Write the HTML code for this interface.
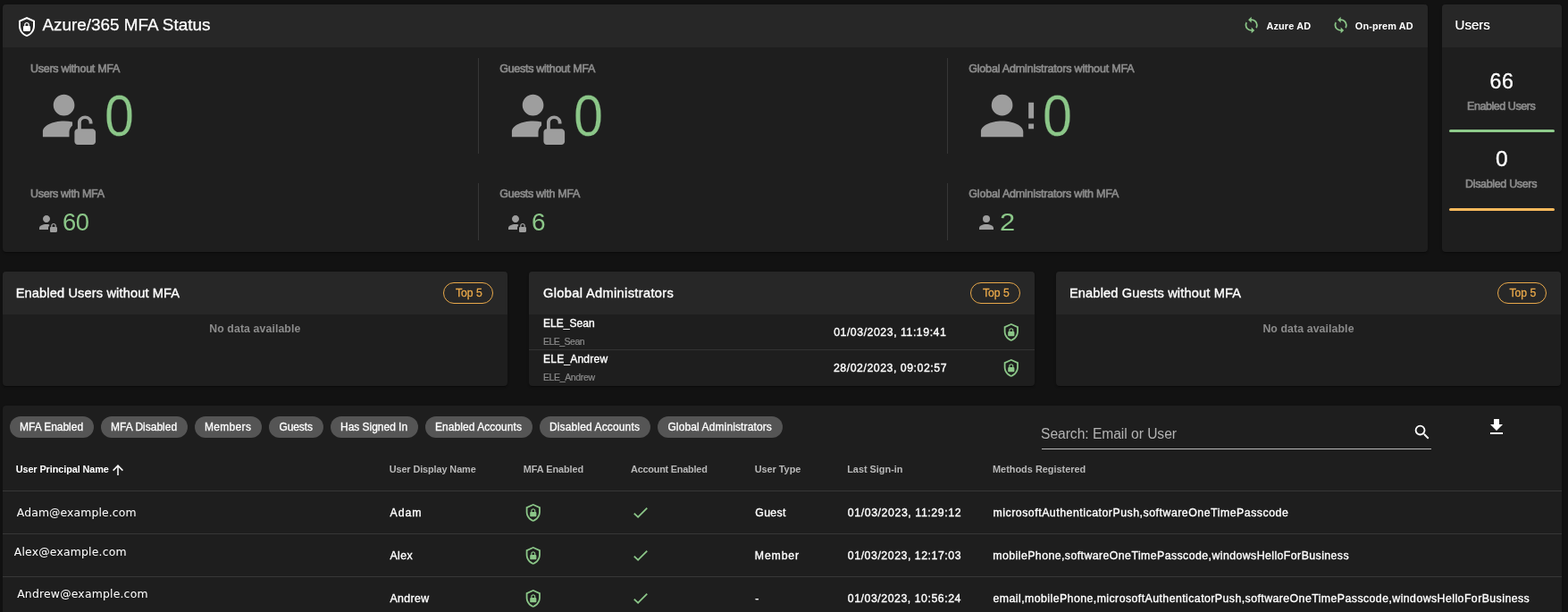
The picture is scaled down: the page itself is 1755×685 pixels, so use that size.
<!DOCTYPE html>
<html lang="en">
<head>
<meta charset="utf-8">
<title>Azure/365 MFA Status</title>
<style>
*{box-sizing:border-box;margin:0;padding:0}
html,body{width:1755px;height:685px;overflow:hidden;background:#121212}
body{position:relative;font-family:"Liberation Sans",sans-serif;color:#fff}
.card{position:absolute;background:#1e1e1e;border-radius:4px;box-shadow:0 2px 1px -1px rgba(0,0,0,.2),0 1px 1px 0 rgba(0,0,0,.14),0 1px 3px 0 rgba(0,0,0,.12);overflow:hidden}
.hdr{position:absolute;left:0;top:0;right:0;height:48px;background:#272727}
#txt{position:absolute;left:0;top:0;width:1755px;height:685px;will-change:transform}
.t{position:absolute;white-space:nowrap;line-height:1}
.vd{position:absolute;width:1px;background:#373737}
.hl{position:absolute;height:1px;background:#373737}
.chip{position:absolute;top:466px;height:24px;border-radius:12px;background:#555}
.top5{position:absolute;top:316px;height:24px;width:56px;border:1px solid #e8a84a;border-radius:12px}
.bar{position:absolute;left:1622px;width:118px;height:3px;border-radius:1.5px}
svg{position:absolute;overflow:visible}
</style>
</head>
<body>
<!-- ================= CARDS ================= -->
<div class="card" style="left:3px;top:5px;width:1595px;height:277px"><div class="hdr"></div></div>
<div class="card" style="left:1614px;top:5px;width:134px;height:277px"><div class="hdr"></div></div>
<div class="card" style="left:3px;top:304px;width:565px;height:128px"><div class="hdr"></div></div>
<div class="card" style="left:592px;top:304px;width:566px;height:128px"><div class="hdr"></div></div>
<div class="card" style="left:1182px;top:304px;width:565px;height:128px"><div class="hdr"></div></div>
<div class="card" style="left:3px;top:454px;width:1745px;height:240px"></div>

<!-- ================= MAIN CARD DETAILS ================= -->
<svg style="left:18.2px;top:17.8px" width="24" height="24" viewBox="0 0 24 24"><path fill="#fff" d="M21,11C21,16.55 17.16,21.74 12,23C6.84,21.74 3,16.55 3,11V5L12,1L21,5V11M12,21C15.75,20 19,15.54 19,11.22V6.3L12,3.18L5,6.3V11.22C5,15.54 8.25,20 12,21M14.8,11V9.5C14.8,8.1 13.4,7 12,7C10.6,7 9.2,8.1 9.2,9.5V11C8.6,11 8,11.6 8,12.2V15.7C8,16.4 8.6,17 9.2,17H14.7C15.4,17 16,16.4 16,15.8V12.3C16,11.6 15.4,11 14.8,11M13.5,11H10.5V9.5C10.5,8.7 11.2,8.2 12,8.2C12.8,8.2 13.5,8.7 13.5,9.5V11Z"/></svg>
<svg style="left:1389.7px;top:18.3px" width="21.3" height="20.2" viewBox="0 0 24 24" preserveAspectRatio="none"><path fill="#8bc688" d="M12,18A6,6 0 0,1 6,12C6,11 6.25,10.03 6.7,9.2L5.24,7.74C4.46,8.97 4,10.43 4,12A8,8 0 0,0 12,20V23L16,19L12,15M12,4V1L8,5L12,9V6A6,6 0 0,1 18,12C18,13 17.75,13.97 17.3,14.8L18.76,16.26C19.54,15.03 20,13.57 20,12A8,8 0 0,0 12,4Z"/></svg>
<svg style="left:1489.6px;top:18.3px" width="21.3" height="20.2" viewBox="0 0 24 24" preserveAspectRatio="none"><path fill="#8bc688" d="M12,18A6,6 0 0,1 6,12C6,11 6.25,10.03 6.7,9.2L5.24,7.74C4.46,8.97 4,10.43 4,12A8,8 0 0,0 12,20V23L16,19L12,15M12,4V1L8,5L12,9V6A6,6 0 0,1 18,12C18,13 17.75,13.97 17.3,14.8L18.76,16.26C19.54,15.03 20,13.57 20,12A8,8 0 0,0 12,4Z"/></svg>
<div class="vd" style="left:535px;top:65px;height:107px"></div>
<div class="vd" style="left:535px;top:205px;height:64px"></div>
<div class="vd" style="left:1060px;top:65px;height:107px"></div>
<div class="vd" style="left:1060px;top:205px;height:64px"></div>
<svg style="left:42px;top:94px" width="71" height="71" viewBox="0 0 24 24"><path fill="#9e9e9e" d="M6 8C6 5.79 7.79 4 10 4S14 5.79 14 8 12.21 12 10 12 6 10.21 6 8M12 18.2C12 17.24 12.5 16.34 13.2 15.74V14.5C13.2 14.45 13.2 14.4 13.21 14.35C12.23 14.13 11.15 14 10 14C5.58 14 2 15.79 2 18V20H12V18.2M22 18.3V21.8C22 22.4 21.4 23 20.7 23H15.2C14.6 23 14 22.4 14 21.7V18.2C14 17.6 14.6 17 15.2 17V14.5C15.2 13.1 16.6 12 18 12S20.8 13.1 20.8 14.5V15H19.5V14.5C19.5 13.7 18.8 13.2 18 13.2S16.5 13.7 16.5 14.5V17H20.8C21.4 17 22 17.6 22 18.3Z"/></svg>
<svg style="left:567px;top:94px" width="71" height="71" viewBox="0 0 24 24"><path fill="#9e9e9e" d="M6 8C6 5.79 7.79 4 10 4S14 5.79 14 8 12.21 12 10 12 6 10.21 6 8M12 18.2C12 17.24 12.5 16.34 13.2 15.74V14.5C13.2 14.45 13.2 14.4 13.21 14.35C12.23 14.13 11.15 14 10 14C5.58 14 2 15.79 2 18V20H12V18.2M22 18.3V21.8C22 22.4 21.4 23 20.7 23H15.2C14.6 23 14 22.4 14 21.7V18.2C14 17.6 14.6 17 15.2 17V14.5C15.2 13.1 16.6 12 18 12S20.8 13.1 20.8 14.5V15H19.5V14.5C19.5 13.7 18.8 13.2 18 13.2S16.5 13.7 16.5 14.5V17H20.8C21.4 17 22 17.6 22 18.3Z"/></svg>
<svg style="left:1092px;top:94px" width="71" height="71" viewBox="0 0 24 24"><path fill="#9e9e9e" d="M10 4A4 4 0 0 1 14 8A4 4 0 0 1 10 12A4 4 0 0 1 6 8A4 4 0 0 1 10 4M10 14C14.42 14 18 15.79 18 18V20H2V18C2 15.79 5.58 14 10 14M20 13V7H22V13H20M20 17V15H22V17H20Z"/></svg>
<svg style="left:42px;top:237px" width="24" height="24" viewBox="0 0 24 24"><path fill="#9e9e9e" d="M6 8C6 5.79 7.79 4 10 4S14 5.79 14 8 12.21 12 10 12 6 10.21 6 8M12 18.2C12 17.24 12.5 16.34 13.2 15.74V15.5C13.2 15.11 13.27 14.74 13.38 14.38C12.35 14.14 11.21 14 10 14C5.58 14 2 15.79 2 18V20H12V18.2M22 18.3V21.8C22 22.4 21.4 23 20.7 23H15.2C14.6 23 14 22.4 14 21.7V18.2C14 17.6 14.6 17 15.2 17V15.5C15.2 14.1 16.6 13 18 13C19.4 13 20.8 14.1 20.8 15.5V17C21.4 17 22 17.6 22 18.3M19.5 15.5C19.5 14.7 18.8 14.2 18 14.2C17.2 14.2 16.5 14.7 16.5 15.5V17H19.5V15.5Z"/></svg>
<svg style="left:567px;top:237px" width="24" height="24" viewBox="0 0 24 24"><path fill="#9e9e9e" d="M6 8C6 5.79 7.79 4 10 4S14 5.79 14 8 12.21 12 10 12 6 10.21 6 8M12 18.2C12 17.24 12.5 16.34 13.2 15.74V15.5C13.2 15.11 13.27 14.74 13.38 14.38C12.35 14.14 11.21 14 10 14C5.58 14 2 15.79 2 18V20H12V18.2M22 18.3V21.8C22 22.4 21.4 23 20.7 23H15.2C14.6 23 14 22.4 14 21.7V18.2C14 17.6 14.6 17 15.2 17V15.5C15.2 14.1 16.6 13 18 13C19.4 13 20.8 14.1 20.8 15.5V17C21.4 17 22 17.6 22 18.3M19.5 15.5C19.5 14.7 18.8 14.2 18 14.2C17.2 14.2 16.5 14.7 16.5 15.5V17H19.5V15.5Z"/></svg>
<svg style="left:1092.2px;top:236.8px" width="24" height="24" viewBox="0 0 24 24"><path fill="#9e9e9e" d="M12,4A4,4 0 0,1 16,8A4,4 0 0,1 12,12A4,4 0 0,1 8,8A4,4 0 0,1 12,4M12,14C16.42,14 20,15.79 20,18V20H4V18C4,15.79 7.58,14 12,14Z"/></svg>

<!-- ================= USERS CARD DETAILS ================= -->
<div class="bar" style="top:145px;background:#8ecb8b"></div>
<div class="bar" style="top:233px;background:#f9b95c"></div>

<!-- ================= ROW 2 DETAILS ================= -->
<div class="top5" style="left:496px"></div>
<div class="top5" style="left:1086px"></div>
<div class="top5" style="left:1676px;width:55px"></div>
<div class="hl" style="left:592px;width:566px;top:391px;background:#333"></div>
<svg style="left:1121.2px;top:360.5px" width="21.6" height="21.6" viewBox="0 0 24 24"><path fill="#8bc688" d="M21,11C21,16.55 17.16,21.74 12,23C6.84,21.74 3,16.55 3,11V5L12,1L21,5V11M12,21C15.75,20 19,15.54 19,11.22V6.3L12,3.18L5,6.3V11.22C5,15.54 8.25,20 12,21M14.8,11V9.5C14.8,8.1 13.4,7 12,7C10.6,7 9.2,8.1 9.2,9.5V11C8.6,11 8,11.6 8,12.2V15.7C8,16.4 8.6,17 9.2,17H14.7C15.4,17 16,16.4 16,15.8V12.3C16,11.6 15.4,11 14.8,11M13.5,11H10.5V9.5C10.5,8.7 11.2,8.2 12,8.2C12.8,8.2 13.5,8.7 13.5,9.5V11Z"/></svg>
<svg style="left:1121.2px;top:400.6px" width="21.6" height="21.6" viewBox="0 0 24 24"><path fill="#8bc688" d="M21,11C21,16.55 17.16,21.74 12,23C6.84,21.74 3,16.55 3,11V5L12,1L21,5V11M12,21C15.75,20 19,15.54 19,11.22V6.3L12,3.18L5,6.3V11.22C5,15.54 8.25,20 12,21M14.8,11V9.5C14.8,8.1 13.4,7 12,7C10.6,7 9.2,8.1 9.2,9.5V11C8.6,11 8,11.6 8,12.2V15.7C8,16.4 8.6,17 9.2,17H14.7C15.4,17 16,16.4 16,15.8V12.3C16,11.6 15.4,11 14.8,11M13.5,11H10.5V9.5C10.5,8.7 11.2,8.2 12,8.2C12.8,8.2 13.5,8.7 13.5,9.5V11Z"/></svg>

<!-- ================= TABLE DETAILS ================= -->
<div class="chip" style="left:11px;width:94px"></div>
<div class="chip" style="left:113px;width:97px"></div>
<div class="chip" style="left:218px;width:75px"></div>
<div class="chip" style="left:301px;width:61px"></div>
<div class="chip" style="left:370px;width:98px"></div>
<div class="chip" style="left:476px;width:120px"></div>
<div class="chip" style="left:604px;width:124px"></div>
<div class="chip" style="left:736px;width:140px"></div>
<div style="position:absolute;left:1166px;top:501.6px;width:436px;height:1.3px;background:#b9b9b9"></div>
<svg style="left:1581.1px;top:473.2px" width="21.6" height="21.6" viewBox="0 0 24 24"><path fill="#fff" d="M9.5,3A6.5,6.5 0 0,1 16,9.5C16,11.11 15.41,12.59 14.44,13.73L14.71,14H15.5L20.5,19L19,20.5L14,15.5V14.71L13.73,14.44C12.59,15.41 11.11,16 9.5,16A6.5,6.5 0 0,1 3,9.5A6.5,6.5 0 0,1 9.5,3M9.5,5C7,5 5,7 5,9.5C5,12 7,14 9.5,14C12,14 14,12 14,9.5C14,7 12,5 9.5,5Z"/></svg>
<svg style="left:1662.7px;top:465.8px" width="24" height="24" viewBox="0 0 24 24"><path fill="#fff" d="M5,20H19V18H5M19,9H15V3H9V9H5L12,16L19,9Z"/></svg>
<svg style="left:122.6px;top:517.3px" width="18" height="18" viewBox="0 0 24 24"><path fill="#fff" d="M13,20H11V8L5.5,13.5L4.08,12.08L12,4.16L19.92,12.08L18.5,13.5L13,8V20Z"/></svg>
<div class="hl" style="left:3px;width:1745px;top:549px"></div>
<div class="hl" style="left:3px;width:1745px;top:597px"></div>
<div class="hl" style="left:3px;width:1745px;top:645px"></div>
<svg style="left:586.2px;top:562.6px" width="21.6" height="21.6" viewBox="0 0 24 24"><path fill="#8bc688" d="M21,11C21,16.55 17.16,21.74 12,23C6.84,21.74 3,16.55 3,11V5L12,1L21,5V11M12,21C15.75,20 19,15.54 19,11.22V6.3L12,3.18L5,6.3V11.22C5,15.54 8.25,20 12,21M14.8,11V9.5C14.8,8.1 13.4,7 12,7C10.6,7 9.2,8.1 9.2,9.5V11C8.6,11 8,11.6 8,12.2V15.7C8,16.4 8.6,17 9.2,17H14.7C15.4,17 16,16.4 16,15.8V12.3C16,11.6 15.4,11 14.8,11M13.5,11H10.5V9.5C10.5,8.7 11.2,8.2 12,8.2C12.8,8.2 13.5,8.7 13.5,9.5V11Z"/></svg>
<svg style="left:705.5px;top:562.6px" width="21.6" height="21.6" viewBox="0 0 24 24"><path fill="#8bc688" d="M21,7L9,19L3.5,13.5L4.91,12.09L9,16.17L19.59,5.59L21,7Z"/></svg>
<svg style="left:586.2px;top:610.6px" width="21.6" height="21.6" viewBox="0 0 24 24"><path fill="#8bc688" d="M21,11C21,16.55 17.16,21.74 12,23C6.84,21.74 3,16.55 3,11V5L12,1L21,5V11M12,21C15.75,20 19,15.54 19,11.22V6.3L12,3.18L5,6.3V11.22C5,15.54 8.25,20 12,21M14.8,11V9.5C14.8,8.1 13.4,7 12,7C10.6,7 9.2,8.1 9.2,9.5V11C8.6,11 8,11.6 8,12.2V15.7C8,16.4 8.6,17 9.2,17H14.7C15.4,17 16,16.4 16,15.8V12.3C16,11.6 15.4,11 14.8,11M13.5,11H10.5V9.5C10.5,8.7 11.2,8.2 12,8.2C12.8,8.2 13.5,8.7 13.5,9.5V11Z"/></svg>
<svg style="left:705.5px;top:610.6px" width="21.6" height="21.6" viewBox="0 0 24 24"><path fill="#8bc688" d="M21,7L9,19L3.5,13.5L4.91,12.09L9,16.17L19.59,5.59L21,7Z"/></svg>
<svg style="left:586.2px;top:658.6px" width="21.6" height="21.6" viewBox="0 0 24 24"><path fill="#8bc688" d="M21,11C21,16.55 17.16,21.74 12,23C6.84,21.74 3,16.55 3,11V5L12,1L21,5V11M12,21C15.75,20 19,15.54 19,11.22V6.3L12,3.18L5,6.3V11.22C5,15.54 8.25,20 12,21M14.8,11V9.5C14.8,8.1 13.4,7 12,7C10.6,7 9.2,8.1 9.2,9.5V11C8.6,11 8,11.6 8,12.2V15.7C8,16.4 8.6,17 9.2,17H14.7C15.4,17 16,16.4 16,15.8V12.3C16,11.6 15.4,11 14.8,11M13.5,11H10.5V9.5C10.5,8.7 11.2,8.2 12,8.2C12.8,8.2 13.5,8.7 13.5,9.5V11Z"/></svg>
<svg style="left:705.5px;top:658.6px" width="21.6" height="21.6" viewBox="0 0 24 24"><path fill="#8bc688" d="M21,7L9,19L3.5,13.5L4.91,12.09L9,16.17L19.59,5.59L21,7Z"/></svg>

<!-- ================= TEXT ================= -->
<div id="txt">
<span class="t" id="t0" style="left:47.40px;top:19.40px;font-size:18.9px;font-weight:400;color:#fff;letter-spacing:0.000px;-webkit-text-stroke:.25px #fff">Azure/365 MFA Status</span>
<span class="t" id="t1" style="left:1417.42px;top:23.57px;font-size:10.9px;font-weight:700;color:#fff;letter-spacing:0.141px">Azure AD</span>
<span class="t" id="t2" style="left:1516.79px;top:23.57px;font-size:10.9px;font-weight:700;color:#fff;letter-spacing:0.127px">On-prem AD</span>
<span class="t" id="t3" style="left:34.10px;top:70.52px;font-size:12.5px;font-weight:400;color:#8b8b8b;letter-spacing:-0.295px;-webkit-text-stroke:.65px #8b8b8b">Users without MFA</span>
<span class="t" id="t4" style="left:559.27px;top:70.52px;font-size:12.5px;font-weight:400;color:#8b8b8b;letter-spacing:-0.285px;-webkit-text-stroke:.65px #8b8b8b">Guests without MFA</span>
<span class="t" id="t5" style="left:1084.18px;top:70.52px;font-size:12.5px;font-weight:400;color:#8b8b8b;letter-spacing:-0.175px;-webkit-text-stroke:.65px #8b8b8b">Global Administrators without MFA</span>
<span class="t" id="t6" style="left:34.07px;top:210.52px;font-size:12.5px;font-weight:400;color:#8b8b8b;letter-spacing:-0.354px;-webkit-text-stroke:.65px #8b8b8b">Users with MFA</span>
<span class="t" id="t7" style="left:559.27px;top:210.52px;font-size:12.5px;font-weight:400;color:#8b8b8b;letter-spacing:-0.321px;-webkit-text-stroke:.65px #8b8b8b">Guests with MFA</span>
<span class="t" id="t8" style="left:1084.32px;top:210.52px;font-size:12.5px;font-weight:400;color:#8b8b8b;letter-spacing:-0.192px;-webkit-text-stroke:.65px #8b8b8b">Global Administrators with MFA</span>
<span class="t" id="t9" style="left:116.65px;top:97.92px;font-size:64.6px;font-weight:400;color:#8bc688;letter-spacing:0.000px;transform-origin:0 50%;transform:scaleX(0.9171);-webkit-text-stroke:.25px #1e1e1e">0</span>
<span class="t" id="t10" style="left:641.65px;top:97.92px;font-size:64.6px;font-weight:400;color:#8bc688;letter-spacing:0.000px;transform-origin:0 50%;transform:scaleX(0.9171);-webkit-text-stroke:.25px #1e1e1e">0</span>
<span class="t" id="t11" style="left:1166.65px;top:97.92px;font-size:64.6px;font-weight:400;color:#8bc688;letter-spacing:0.000px;transform-origin:0 50%;transform:scaleX(0.9171);-webkit-text-stroke:.25px #1e1e1e">0</span>
<span class="t" id="t12" style="left:70.00px;top:234.91px;font-size:27.4px;font-weight:400;color:#8bc688;letter-spacing:-0.480px">60</span>
<span class="t" id="t13" style="left:595.20px;top:234.91px;font-size:27.4px;font-weight:400;color:#8bc688;letter-spacing:0.000px;transform-origin:0 50%;transform:scaleX(1.0226)">6</span>
<span class="t" id="t14" style="left:1119.46px;top:234.91px;font-size:27.4px;font-weight:400;color:#8bc688;letter-spacing:0.000px;transform-origin:0 50%;transform:scaleX(1.1251)">2</span>
<span class="t" id="t15" style="left:1628.56px;top:20.32px;font-size:15.1px;font-weight:400;color:#fff;letter-spacing:-0.019px;text-shadow:0 0 .5px #fff">Users</span>
<span class="t" id="t16" style="left:1667.42px;top:80.46px;font-size:23.2px;font-weight:400;color:#fff;letter-spacing:0.770px;-webkit-text-stroke:.3px #fff">66</span>
<span class="t" id="t17" style="left:1642.08px;top:112.62px;font-size:12.5px;font-weight:400;color:#8b8b8b;letter-spacing:-0.446px;-webkit-text-stroke:.65px #8b8b8b">Enabled Users</span>
<span class="t" id="t18" style="left:1673.76px;top:166.66px;font-size:23.2px;font-weight:400;color:#fff;letter-spacing:0.000px;transform-origin:0 50%;transform:scaleX(1.0577);-webkit-text-stroke:.3px #fff">0</span>
<span class="t" id="t19" style="left:1640.03px;top:200.42px;font-size:12.5px;font-weight:400;color:#8b8b8b;letter-spacing:-0.333px;-webkit-text-stroke:.65px #8b8b8b">Disabled Users</span>
<span class="t" id="t20" style="left:17.66px;top:320.64px;font-size:14.6px;font-weight:400;color:#fff;letter-spacing:0.139px;-webkit-text-stroke:.35px #fff">Enabled Users without MFA</span>
<span class="t" id="t21" style="left:608.07px;top:320.64px;font-size:14.6px;font-weight:400;color:#fff;letter-spacing:0.350px;-webkit-text-stroke:.35px #fff">Global Administrators</span>
<span class="t" id="t22" style="left:1196.93px;top:320.64px;font-size:14.6px;font-weight:400;color:#fff;letter-spacing:0.156px;-webkit-text-stroke:.35px #fff">Enabled Guests without MFA</span>
<span class="t" id="t23" style="left:510.00px;top:321.67px;font-size:12.2px;font-weight:400;color:#e8a84a;letter-spacing:0.000px;-webkit-text-stroke:.3px #e8a84a">Top 5</span>
<span class="t" id="t24" style="left:1100.00px;top:321.67px;font-size:12.2px;font-weight:400;color:#e8a84a;letter-spacing:0.000px;-webkit-text-stroke:.3px #e8a84a">Top 5</span>
<span class="t" id="t25" style="left:1689.40px;top:321.67px;font-size:12.2px;font-weight:400;color:#e8a84a;letter-spacing:0.000px;-webkit-text-stroke:.3px #e8a84a">Top 5</span>
<span class="t" id="t26" style="left:234.20px;top:361.69px;font-size:12.3px;font-weight:700;color:#8b8b8b;letter-spacing:0.106px">No data available</span>
<span class="t" id="t27" style="left:1413.40px;top:361.69px;font-size:12.3px;font-weight:700;color:#8b8b8b;letter-spacing:0.101px">No data available</span>
<span class="t" id="t28" style="left:607.88px;top:355.84px;font-size:12.0px;font-weight:400;color:#fff;letter-spacing:0.042px;-webkit-text-stroke:.35px #fff">ELE_Sean</span>
<span class="t" id="t29" style="left:607.92px;top:377.11px;font-size:10.5px;font-weight:400;color:#8b8b8b;letter-spacing:-0.509px;-webkit-text-stroke:.2px #8b8b8b">ELE_Sean</span>
<span class="t" id="t30" style="left:608.03px;top:395.94px;font-size:12.0px;font-weight:400;color:#fff;letter-spacing:0.221px;-webkit-text-stroke:.35px #fff">ELE_Andrew</span>
<span class="t" id="t31" style="left:607.92px;top:416.91px;font-size:10.5px;font-weight:400;color:#8b8b8b;letter-spacing:-0.349px;-webkit-text-stroke:.2px #8b8b8b">ELE_Andrew</span>
<span class="t" id="t32" style="left:933.13px;top:365.59px;font-size:12.3px;font-weight:400;color:#fff;letter-spacing:0.546px;-webkit-text-stroke:.35px #fff">01/03/2023, 11:19:41</span>
<span class="t" id="t33" style="left:932.98px;top:405.59px;font-size:12.3px;font-weight:400;color:#fff;letter-spacing:0.540px;-webkit-text-stroke:.35px #fff">28/02/2023, 09:02:57</span>
<span class="t" id="t34" style="left:1165.05px;top:477.79px;font-size:15.6px;font-weight:400;color:#b4b4b4;letter-spacing:-0.030px">Search: Email or User</span>
<span class="t" id="t35" style="left:17.67px;top:519.87px;font-size:10.9px;font-weight:700;color:#fff;letter-spacing:-0.092px">User Principal Name</span>
<span class="t" id="t36" style="left:435.66px;top:519.77px;font-size:10.9px;font-weight:700;color:#b8b8b8;letter-spacing:-0.100px">User Display Name</span>
<span class="t" id="t37" style="left:585.77px;top:519.77px;font-size:10.9px;font-weight:700;color:#b8b8b8;letter-spacing:-0.049px">MFA Enabled</span>
<span class="t" id="t38" style="left:706.01px;top:519.77px;font-size:10.9px;font-weight:700;color:#b8b8b8;letter-spacing:-0.225px">Account Enabled</span>
<span class="t" id="t39" style="left:844.68px;top:519.77px;font-size:10.9px;font-weight:700;color:#b8b8b8;letter-spacing:-0.025px">User Type</span>
<span class="t" id="t40" style="left:948.20px;top:519.77px;font-size:10.9px;font-weight:700;color:#b8b8b8;letter-spacing:-0.005px">Last Sign-in</span>
<span class="t" id="t41" style="left:1111.00px;top:519.77px;font-size:10.9px;font-weight:700;color:#b8b8b8;letter-spacing:0.010px">Methods Registered</span>
<span class="t" id="t42" style="left:436.44px;top:567.79px;font-size:12.3px;font-weight:400;color:#fff;letter-spacing:0.998px;-webkit-text-stroke:.35px #fff">Adam</span>
<span class="t" id="t43" style="left:845.36px;top:567.79px;font-size:12.3px;font-weight:400;color:#fff;letter-spacing:0.289px;-webkit-text-stroke:.35px #fff">Guest</span>
<span class="t" id="t44" style="left:948.87px;top:567.79px;font-size:12.3px;font-weight:400;color:#fff;letter-spacing:0.594px;-webkit-text-stroke:.35px #fff">01/03/2023, 11:29:12</span>
<span class="t" id="t45" style="left:1111.51px;top:567.79px;font-size:12.3px;font-weight:400;color:#fff;letter-spacing:0.528px;-webkit-text-stroke:.35px #fff">microsoftAuthenticatorPush,softwareOneTimePasscode</span>
<span class="t" id="t46" style="left:436.49px;top:615.79px;font-size:12.3px;font-weight:400;color:#fff;letter-spacing:0.437px;-webkit-text-stroke:.35px #fff">Alex</span>
<span class="t" id="t47" style="left:844.84px;top:615.79px;font-size:12.3px;font-weight:400;color:#fff;letter-spacing:0.833px;-webkit-text-stroke:.35px #fff">Member</span>
<span class="t" id="t48" style="left:948.87px;top:615.79px;font-size:12.3px;font-weight:400;color:#fff;letter-spacing:0.550px;-webkit-text-stroke:.35px #fff">01/03/2023, 12:17:03</span>
<span class="t" id="t49" style="left:1111.37px;top:615.79px;font-size:12.3px;font-weight:400;color:#fff;letter-spacing:0.440px;-webkit-text-stroke:.35px #fff">mobilePhone,softwareOneTimePasscode,windowsHelloForBusiness</span>
<span class="t" id="t50" style="left:436.47px;top:663.69px;font-size:12.3px;font-weight:400;color:#fff;letter-spacing:0.381px;-webkit-text-stroke:.35px #fff">Andrew</span>
<span class="t" id="t51" style="left:845.18px;top:663.69px;font-size:12.3px;font-weight:400;color:#fff;letter-spacing:0.000px;-webkit-text-stroke:.35px #fff">-</span>
<span class="t" id="t52" style="left:948.87px;top:663.69px;font-size:12.3px;font-weight:400;color:#fff;letter-spacing:0.539px;-webkit-text-stroke:.35px #fff">01/03/2023, 10:56:24</span>
<span class="t" id="t53" style="left:1111.55px;top:663.69px;font-size:12.3px;font-weight:400;color:#fff;letter-spacing:0.449px;-webkit-text-stroke:.35px #fff">email,mobilePhone,microsoftAuthenticatorPush,softwareOneTimePasscode,windowsHelloForBusiness</span>
<span class="t" id="t54" style="left:18.83px;top:568.31px;font-size:12.4px;font-weight:400;color:#fff;letter-spacing:0.119px;font-family:'DejaVu Sans','Liberation Sans',sans-serif">Adam@example.com</span>
<span class="t" id="t55" style="left:15.80px;top:612.41px;font-size:12.4px;font-weight:400;color:#fff;letter-spacing:0.195px;font-family:'DejaVu Sans','Liberation Sans',sans-serif">Alex@example.com</span>
<span class="t" id="t56" style="left:19.17px;top:658.51px;font-size:12.4px;font-weight:400;color:#fff;letter-spacing:0.202px;font-family:'DejaVu Sans','Liberation Sans',sans-serif">Andrew@example.com</span>
<span class="t" id="t57" style="left:22.09px;top:472.24px;font-size:12.0px;font-weight:400;color:#fff;letter-spacing:-0.040px;-webkit-text-stroke:.3px #fff">MFA Enabled</span>
<span class="t" id="t58" style="left:124.09px;top:472.24px;font-size:12.0px;font-weight:400;color:#fff;letter-spacing:-0.004px;-webkit-text-stroke:.3px #fff">MFA Disabled</span>
<span class="t" id="t59" style="left:229.04px;top:472.24px;font-size:12.0px;font-weight:400;color:#fff;letter-spacing:0.308px;-webkit-text-stroke:.3px #fff">Members</span>
<span class="t" id="t60" style="left:312.49px;top:472.24px;font-size:12.0px;font-weight:400;color:#fff;letter-spacing:-0.119px;-webkit-text-stroke:.3px #fff">Guests</span>
<span class="t" id="t61" style="left:381.04px;top:472.24px;font-size:12.0px;font-weight:400;color:#fff;letter-spacing:-0.027px;-webkit-text-stroke:.3px #fff">Has Signed In</span>
<span class="t" id="t62" style="left:486.99px;top:472.24px;font-size:12.0px;font-weight:400;color:#fff;letter-spacing:0.056px;-webkit-text-stroke:.3px #fff">Enabled Accounts</span>
<span class="t" id="t63" style="left:614.99px;top:472.24px;font-size:12.0px;font-weight:400;color:#fff;letter-spacing:0.137px;-webkit-text-stroke:.3px #fff">Disabled Accounts</span>
<span class="t" id="t64" style="left:747.43px;top:472.24px;font-size:12.0px;font-weight:400;color:#fff;letter-spacing:0.117px;-webkit-text-stroke:.3px #fff">Global Administrators</span>
</div>

</body>
</html>
